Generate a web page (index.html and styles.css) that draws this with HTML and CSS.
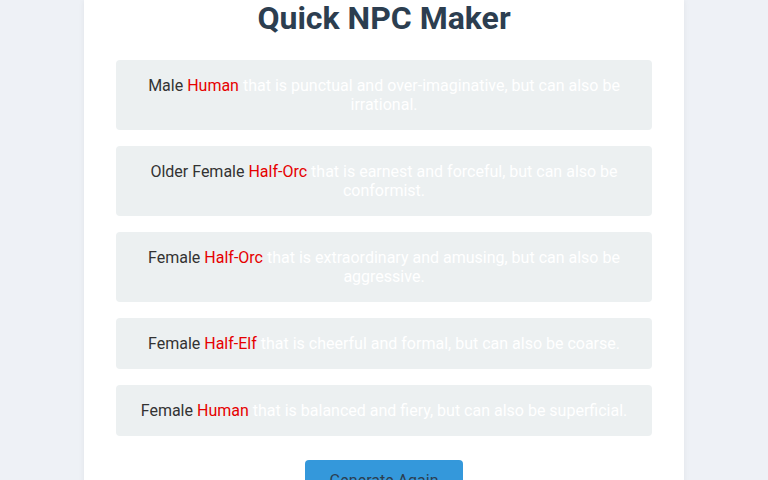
FILE: index.html
```html
<!DOCTYPE html>
<html lang="en">
<head>
<meta charset="utf-8">
<title>Quick NPC Maker</title>
<link rel="stylesheet" href="styles.css">
</head>
<body>
<main class="card">
  <h1 class="title">Quick NPC Maker</h1>
  <ul class="npc-list">
    <li class="npc"><span class="who">Male</span> <span class="race">Human</span> <span class="traits">that is punctual and over-imaginative, but can also be irrational.</span></li>
    <li class="npc"><span class="who">Older Female</span> <span class="race">Half-Orc</span> <span class="traits">that is earnest and forceful, but can also be conformist.</span></li>
    <li class="npc"><span class="who">Female</span> <span class="race">Half-Orc</span> <span class="traits">that is extraordinary and amusing, but can also be aggressive.</span></li>
    <li class="npc"><span class="who">Female</span> <span class="race">Half-Elf</span> <span class="traits">that is cheerful and formal, but can also be coarse.</span></li>
    <li class="npc"><span class="who">Female</span> <span class="race">Human</span> <span class="traits">that is balanced and fiery, but can also be superficial.</span></li>
  </ul>
  <div class="actions">
    <button class="btn" type="button">Generate Again</button>
  </div>
</main>
</body>
</html>
```

FILE: styles.css
```css
html, body {
  margin: 0;
  padding: 0;
}
body {
  background: #eef1f6;
  font-family: Roboto, "Liberation Sans", Arial, sans-serif;
  color: #333;
}
.card {
  width: 600px;
  margin: 0 auto;
  box-sizing: border-box;
  padding: 0 32px 32px;
  background: #ffffff;
  box-shadow: 0 0 6px rgba(0, 0, 0, 0.06);
  min-height: 480px;
}
.title {
  margin: 0 0 24px;
  font-size: 32px;
  line-height: 36px;
  font-weight: 700;
  color: #2c3e50;
  text-align: center;
}
.npc-list {
  list-style: none;
  margin: 0;
  padding: 0;
  display: flex;
  flex-direction: column;
  gap: 16px;
}
.npc {
  background: #ecf0f1;
  border-radius: 4px;
  padding: 16px;
  font-size: 16px;
  line-height: 19px;
  text-align: center;
}
.who { color: #333333; }
.race { color: #e60000; }
.traits { color: #ffffff; }
.actions {
  display: flex;
  justify-content: center;
  margin-top: 24px;
}
.btn {
  width: 158px;
  height: 40px;
  border: none;
  border-radius: 4px;
  background: #3498db;
  color: #2c3e50;
  font-family: inherit;
  font-size: 16px;
  padding: 0 24px;
}
```
